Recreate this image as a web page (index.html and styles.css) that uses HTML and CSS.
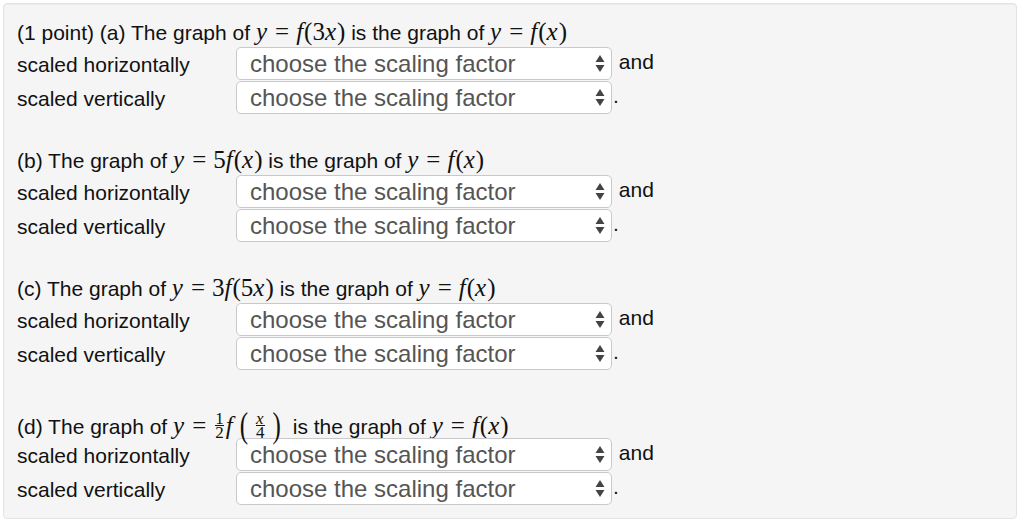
FILE: index.html
```html
<!DOCTYPE html>
<html lang="en">
<head>
    <meta charset="UTF-8">
    <meta name="viewport" content="width=device-width, initial-scale=1.0">
    <title>Scaling of graphs</title>
    <link rel="stylesheet" href="styles.css">
</head>
<body>
    <div class="problem">
        <div class="part">
            <p class="question">(1 point) (a) The graph of <span class="math"><i>y</i><span class="rel">=</span><i>f</i>(3<i>x</i>)</span> is the graph of <span class="math"><i>y</i><span class="rel">=</span><i>f</i>(<i>x</i>)</span></p>
            <div class="answers">
                <span class="label">scaled horizontally</span>
                <div class="select"><span>choose the scaling factor</span><svg class="arrows" viewBox="0 0 10 19"><path d="M5 1 L9.5 8 L0.5 8 Z M0.5 11 L9.5 11 L5 18 Z"/></svg></div>
                <span class="tail">&nbsp;and</span>
                <span class="label">scaled vertically</span>
                <div class="select"><span>choose the scaling factor</span><svg class="arrows" viewBox="0 0 10 19"><path d="M5 1 L9.5 8 L0.5 8 Z M0.5 11 L9.5 11 L5 18 Z"/></svg></div>
                <span class="tail">.</span>
            </div>
        </div>
        <div class="part">
            <p class="question">(b) The graph of <span class="math"><i>y</i><span class="rel">=</span>5<i>f</i>(<i>x</i>)</span> is the graph of <span class="math"><i>y</i><span class="rel">=</span><i>f</i>(<i>x</i>)</span></p>
            <div class="answers">
                <span class="label">scaled horizontally</span>
                <div class="select"><span>choose the scaling factor</span><svg class="arrows" viewBox="0 0 10 19"><path d="M5 1 L9.5 8 L0.5 8 Z M0.5 11 L9.5 11 L5 18 Z"/></svg></div>
                <span class="tail">&nbsp;and</span>
                <span class="label">scaled vertically</span>
                <div class="select"><span>choose the scaling factor</span><svg class="arrows" viewBox="0 0 10 19"><path d="M5 1 L9.5 8 L0.5 8 Z M0.5 11 L9.5 11 L5 18 Z"/></svg></div>
                <span class="tail">.</span>
            </div>
        </div>
        <div class="part">
            <p class="question">(c) The graph of <span class="math"><i>y</i><span class="rel">=</span>3<i>f</i>(5<i>x</i>)</span> is the graph of <span class="math"><i>y</i><span class="rel">=</span><i>f</i>(<i>x</i>)</span></p>
            <div class="answers">
                <span class="label">scaled horizontally</span>
                <div class="select"><span>choose the scaling factor</span><svg class="arrows" viewBox="0 0 10 19"><path d="M5 1 L9.5 8 L0.5 8 Z M0.5 11 L9.5 11 L5 18 Z"/></svg></div>
                <span class="tail">&nbsp;and</span>
                <span class="label">scaled vertically</span>
                <div class="select"><span>choose the scaling factor</span><svg class="arrows" viewBox="0 0 10 19"><path d="M5 1 L9.5 8 L0.5 8 Z M0.5 11 L9.5 11 L5 18 Z"/></svg></div>
                <span class="tail">.</span>
            </div>
        </div>
        <div class="part">
            <p class="question tall">(d) The graph of <span class="math"><i>y</i><span class="rel">=</span><span class="frac"><span>1</span><span class="den">2</span></span><i>f</i><span class="big">(</span><span class="frac"><i>x</i><span class="den">4</span></span><span class="big">)</span></span> is the graph of <span class="math"><i>y</i><span class="rel">=</span><i>f</i>(<i>x</i>)</span></p>
            <div class="answers">
                <span class="label">scaled horizontally</span>
                <div class="select"><span>choose the scaling factor</span><svg class="arrows" viewBox="0 0 10 19"><path d="M5 1 L9.5 8 L0.5 8 Z M0.5 11 L9.5 11 L5 18 Z"/></svg></div>
                <span class="tail">&nbsp;and</span>
                <span class="label">scaled vertically</span>
                <div class="select"><span>choose the scaling factor</span><svg class="arrows" viewBox="0 0 10 19"><path d="M5 1 L9.5 8 L0.5 8 Z M0.5 11 L9.5 11 L5 18 Z"/></svg></div>
                <span class="tail">.</span>
            </div>
        </div>
    </div>
</body>
</html>
```

FILE: styles.css
```css
body {
    margin: 0;
    font-family: "Liberation Sans", Arial, sans-serif;
    font-size: 21px;
    color: #111;
    background-color: #ffffff;
}
.problem {
    margin: 3px 0 0 3px;
    width: 985px;
    padding: 13px 14px 13px 13px;
    background-color: #f5f5f5;
    border: 1px solid #e3e3e3;
    border-radius: 4px;
    box-shadow: inset 0 1px 1px rgba(0,0,0,0.04);
}
.part {
    margin-bottom: 31px;
}
.part:last-child {
    margin-bottom: 0;
}
.question {
    margin: 0;
    height: 30px;
    line-height: 30px;
    white-space: nowrap;
}
.question.tall {
    height: 27px;
    padding-top: 10px;
}
.math {
    font-family: "Liberation Serif", "Times New Roman", serif;
    font-size: 25px;
}
.math i {
    padding-right: 1px;
}
.rel {
    margin: 0 7px;
}
.frac {
    display: inline-flex;
    flex-direction: column;
    align-items: center;
    font-size: 17px;
    line-height: 12px;
    vertical-align: 10px;
    padding: 0 2px;
}
.frac .den {
    border-top: 1px solid #111;
    padding-top: 1px;
}
.big {
    display: inline-block;
    transform: scaleY(1.4);
    margin: 0 6px;
}
.answers {
    display: grid;
    grid-template-columns: 219px 376px auto;
    row-gap: 1px;
    align-items: start;
}
.label {
    line-height: 30px;
    padding-top: 3px;
}
.select {
    display: flex;
    align-items: center;
    justify-content: space-between;
    box-sizing: border-box;
    height: 33px;
    padding: 0 6px 0 13px;
    background-color: #ffffff;
    border: 1px solid #c9c9c9;
    border-radius: 5px;
    font-size: 24px;
    color: #555;
}
.arrows {
    width: 10px;
    height: 19px;
    fill: #444;
}
.tail {
    line-height: 30px;
    padding-left: 1px;
}
```
